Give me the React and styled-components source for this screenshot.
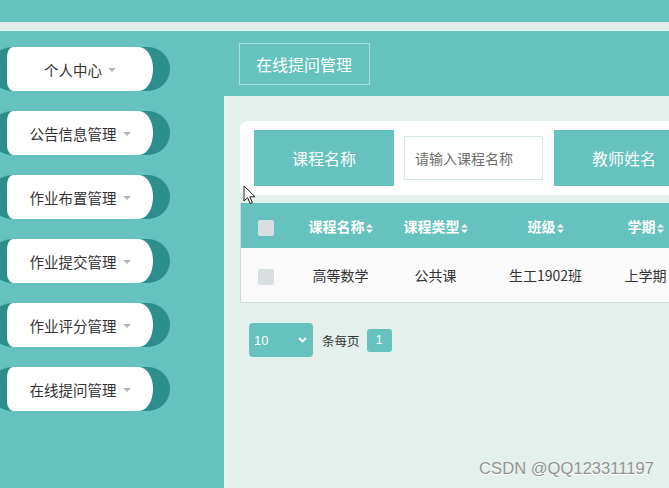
import React from 'react'
import styled, { createGlobalStyle } from 'styled-components'

const teal = '#66c2be'
const darkTeal = '#2c8f8b'
const paleBg = '#e4f0ec'
const cjk = `"Noto Sans CJK SC", "Noto Sans", sans-serif`

const GlobalStyle = createGlobalStyle`
  html, body {
    margin: 0;
    padding: 0;
    overflow: hidden;
    font-family: ${cjk};
  }
`

const Page = styled.div`
  position: relative;
  height: 100vh;
  display: flex;
  flex-direction: column;
  background: ${paleBg};
`

const Header = styled.div`
  height: 22px;
  background: ${teal};
  flex-shrink: 0;
`

const HeaderGap = styled.div`
  height: 9px;
  background: #e2eeec;
  flex-shrink: 0;
`

const Body = styled.div`
  flex: 1;
  display: flex;
  min-height: 0;
`

const Sidebar = styled.nav`
  width: 224px;
  flex-shrink: 0;
  background: ${teal};
  padding-top: 16px;
  display: flex;
  flex-direction: column;
  gap: 20px;
  overflow: hidden;
`

const MenuPill = styled.div`
  width: 180px;
  height: 44px;
  margin-left: -10px;
  box-sizing: border-box;
  padding: 0 17px;
  border-radius: 22px;
  background: ${darkTeal};
  display: flex;
`

const MenuFace = styled.div`
  flex: 1;
  background: #fff;
  border-radius: 6px 14px 14px 6px / 10px 22px 22px 10px;
  display: flex;
  align-items: center;
  justify-content: center;
  gap: 6px;
  font-size: 14.5px;
  color: #333;
`

const Caret = styled.span`
  width: 0;
  height: 0;
  border-left: 4px solid transparent;
  border-right: 4px solid transparent;
  border-top: 4px solid #b5b5b5;
  margin-top: 1px;
`

const Main = styled.div`
  flex: 1;
  display: flex;
  flex-direction: column;
  min-width: 0;
  overflow: hidden;
`

const TopBar = styled.div`
  height: 65px;
  flex-shrink: 0;
  background: ${teal};
  padding: 12px 15px 0;
  box-sizing: border-box;
`

const Crumb = styled.div`
  display: inline-flex;
  align-items: center;
  height: 42px;
  padding: 0 17px 0 16px;
  box-sizing: border-box;
  border: 1px solid rgba(255, 255, 255, 0.45);
  color: #fff;
  font-size: 16px;
`

const Content = styled.div`
  flex: 1;
  background: ${paleBg};
  border-left: 4px solid #ecf1ef;
  padding: 25px 0 0 12px;
  display: flex;
  flex-direction: column;
  align-items: flex-start;
`

const SearchCard = styled.div`
  width: 720px;
  height: 74px;
  flex-shrink: 0;
  box-sizing: border-box;
  background: #fff;
  border-radius: 8px 0 0 8px;
  padding: 8px 14px;
  display: flex;
  align-items: center;
  gap: 10px;
`

const SearchLabel = styled.div`
  width: 140px;
  height: 56px;
  flex-shrink: 0;
  background: ${teal};
  color: #fff;
  font-size: 16px;
  display: flex;
  align-items: center;
  justify-content: center;
`

const SearchInput = styled.input`
  width: 139px;
  height: 44px;
  box-sizing: border-box;
  flex-shrink: 0;
  border: 1px solid #d6e6e2;
  padding: 0 10px;
  font-family: ${cjk};
  font-size: 14px;
  margin-right: 1px;
  outline: none;
  &::placeholder {
    color: #6f6f6f;
  }
`

const Table = styled.table`
  margin-top: 8px;
  width: 560px;
  flex-shrink: 0;
  border-collapse: collapse;
  border-left: 1px solid #d4d8d6;
  border-bottom: 1px solid #d4d8d6;
  table-layout: fixed;
`

const Col = styled.col`
  width: ${(p) => p.$w}px;
`

const HeadCell = styled.th`
  height: 45px;
  padding: 0;
  background: ${teal};
  color: #fff;
  font-size: 14px;
  font-weight: bold;
  text-align: center;
  white-space: nowrap;
`

const Cell = styled.td`
  height: 54px;
  padding: 0;
  background: #fafafa;
  color: #333;
  font-size: 14px;
  text-align: center;
  white-space: nowrap;
`

const Check = styled.span`
  display: inline-block;
  width: 16px;
  height: 16px;
  background: #d9dee1;
  border-radius: 2px;
  vertical-align: middle;
`

const SortIcon = () => (
  <svg width="7" height="9" viewBox="0 0 7 9" style={{ marginLeft: 1, verticalAlign: -1 }}>
    <path d="M3.5 0L7 3.6H0Z M3.5 9L0 5.4H7Z" fill="#fff" />
  </svg>
)

const Pager = styled.div`
  margin-top: 20px;
  padding-left: 9px;
  display: flex;
  align-items: center;
  gap: 9px;
`

const PageSize = styled.div`
  width: 64px;
  height: 34px;
  box-sizing: border-box;
  background: ${teal};
  border-radius: 4px;
  color: #fff;
  font-family: "Liberation Sans", sans-serif;
  font-size: 13px;
  display: flex;
  align-items: center;
  justify-content: space-between;
  padding: 0 6px 0 5px;
`

const PagerText = styled.span`
  font-size: 12.5px;
  color: #333;
  margin-right: -2px;
`

const PageButton = styled.div`
  width: 25px;
  height: 23px;
  background: ${teal};
  border-radius: 3px;
  color: #fff;
  font-family: "Liberation Sans", sans-serif;
  font-size: 12px;
  display: flex;
  align-items: center;
  justify-content: center;
`

const Watermark = styled.div`
  position: absolute;
  right: 15px;
  bottom: 9px;
  font-family: "Liberation Sans", Arial, sans-serif;
  font-size: 16.6px;
  color: #939393;
  text-shadow: 0 1px 0 #fff;
`

const Cursor = styled.svg`
  position: absolute;
  left: 243px;
  top: 185px;
`

const menu = ['个人中心', '公告信息管理', '作业布置管理', '作业提交管理', '作业评分管理', '在线提问管理']

const columns = [
  { key: 'name', label: '课程名称', w: 100 },
  { key: 'type', label: '课程类型', w: 90 },
  { key: 'cls', label: '班级', w: 130 },
  { key: 'term', label: '学期', w: 70 },
]

const row = { name: '高等数学', type: '公共课', cls: '生工1902班', term: '上学期' }

export default function App() {
  return (
    <Page>
      <GlobalStyle />
      <Header />
      <HeaderGap />
      <Body>
        <Sidebar>
          {menu.map((m) => (
            <MenuPill key={m}>
              <MenuFace>
                {m}
                <Caret />
              </MenuFace>
            </MenuPill>
          ))}
        </Sidebar>
        <Main>
          <TopBar>
            <Crumb>在线提问管理</Crumb>
          </TopBar>
          <Content>
            <SearchCard>
              <SearchLabel>课程名称</SearchLabel>
              <SearchInput placeholder="请输入课程名称" />
              <SearchLabel>教师姓名</SearchLabel>
            </SearchCard>
            <Table>
              <colgroup>
                <Col $w={50} />
                {columns.map((c) => (
                  <Col key={c.key} $w={c.w} />
                ))}
                <Col $w={120} />
              </colgroup>
              <thead>
                <tr>
                  <HeadCell>
                    <Check />
                  </HeadCell>
                  {columns.map((c) => (
                    <HeadCell key={c.key}>
                      {c.label}
                      <SortIcon />
                    </HeadCell>
                  ))}
                  <HeadCell />
                </tr>
              </thead>
              <tbody>
                <tr>
                  <Cell>
                    <Check />
                  </Cell>
                  {columns.map((c) => (
                    <Cell key={c.key}>{row[c.key]}</Cell>
                  ))}
                  <Cell />
                </tr>
              </tbody>
            </Table>
            <Pager>
              <PageSize>
                10
                <svg width="9" height="6" viewBox="0 0 9 6">
                  <path d="M1 1l3.5 3.5L8 1" stroke="#fff" strokeWidth="1.8" fill="none" />
                </svg>
              </PageSize>
              <PagerText>条每页</PagerText>
              <PageButton>1</PageButton>
            </Pager>
          </Content>
        </Main>
      </Body>
      <Cursor width="13" height="20" viewBox="0 0 13 20">
        <path d="M1 1v15l3.6-3.4 2.6 6 2.2-1-2.6-5.8H12Z" fill="#fff" stroke="#222" strokeWidth="1" />
      </Cursor>
      <Watermark>CSDN @QQ123311197</Watermark>
    </Page>
  )
}
